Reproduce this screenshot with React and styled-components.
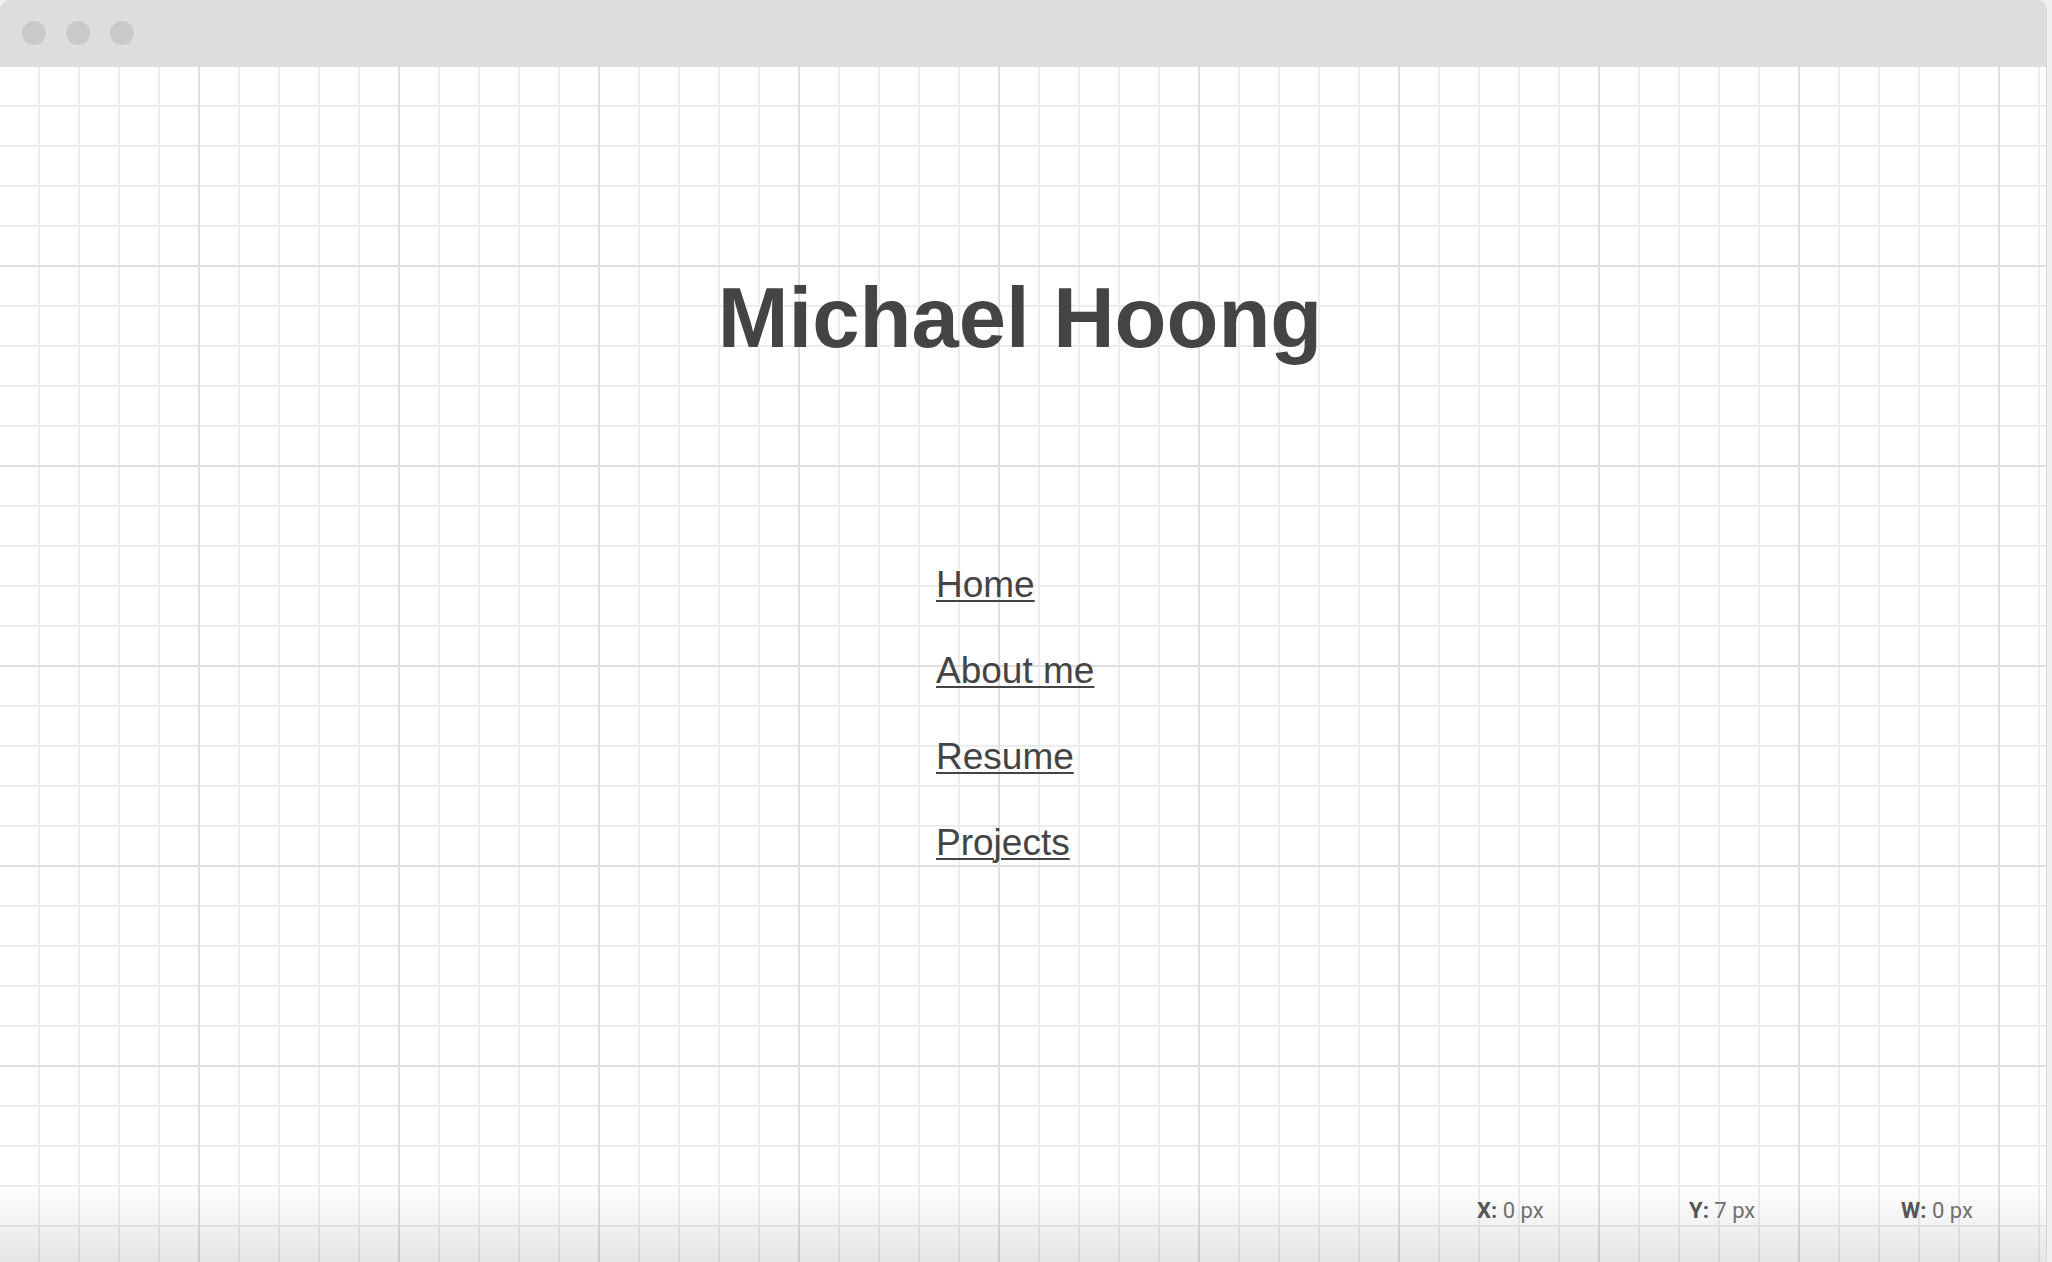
import styled, { createGlobalStyle } from 'styled-components'

const GlobalStyle = createGlobalStyle`
  html, body {
    margin: 0;
    height: 100%;
    background: #f0f0f0;
    font-family: "Liberation Sans", Arial, sans-serif;
  }
  #root {
    height: 100%;
  }
`

const Window = styled.div`
  height: 100%;
  width: 2046px;
  display: flex;
  flex-direction: column;
  border-right: 1px solid #d6d6d6;
  border-radius: 10px 10px 0 0;
  overflow: hidden;
  background: #fff;
`

const TitleBar = styled.div`
  height: 66px;
  flex-shrink: 0;
  background: #dddddd;
  display: flex;
  align-items: center;
  gap: 20px;
  padding-left: 22px;
`

const Dot = styled.span`
  width: 24px;
  height: 24px;
  border-radius: 50%;
  background: #c9c9c9;
`

const Canvas = styled.div`
  flex: 1;
  position: relative;
  background-color: #fff;
  background-image:
    linear-gradient(to right, #dfdfdf 2px, transparent 2px),
    linear-gradient(to bottom, #dfdfdf 2px, transparent 2px),
    linear-gradient(to right, #ededed 2px, transparent 2px),
    linear-gradient(to bottom, #ededed 2px, transparent 2px);
  background-size: 200px 200px, 200px 200px, 40px 40px, 40px 40px;
  background-position: -2px -1px, -2px -1px, -2px -1px, -2px -1px;
`

const Main = styled.main`
  display: flex;
  flex-direction: column;
  align-items: center;
  padding: 209px 6px 0 0;
`

const Title = styled.h1`
  margin: 0;
  font-size: 85px;
  line-height: 1;
  font-weight: 700;
  color: #444;
`

const Nav = styled.nav`
  width: 168px;
  margin-top: 206px;
  display: flex;
  flex-direction: column;
  align-items: flex-start;
  gap: 49px;
`

const NavLink = styled.a`
  font-size: 37px;
  line-height: 1;
  color: #444;
  text-decoration: underline;
  text-decoration-thickness: 2px;
  text-underline-offset: 3px;
`

const StatusBar = styled.div`
  position: absolute;
  left: 0;
  right: 0;
  bottom: 0;
  height: 76px;
  box-sizing: border-box;
  padding: 13px 70px 0 0;
  display: grid;
  grid-template-columns: 212px 212px 75px;
  justify-content: end;
  align-content: start;
  background: linear-gradient(to bottom, rgba(0, 0, 0, 0), rgba(0, 0, 0, 0.1));
  font-family: Roboto, "Liberation Sans", sans-serif;
  font-size: 22px;
  line-height: 23px;
  color: #707070;
`

const Label = styled.b`
  color: #555;
  font-weight: 700;
`

const links = ['Home', 'About me', 'Resume', 'Projects']
const coords = [['X', 0], ['Y', 7], ['W', 0]]

export default function App() {
  return (
    <>
      <GlobalStyle />
      <Window>
        <TitleBar>
          <Dot />
          <Dot />
          <Dot />
        </TitleBar>
        <Canvas>
          <Main>
            <Title>Michael Hoong</Title>
            <Nav>
              {links.map(l =>
                <NavLink key={l} href="#">{l}</NavLink>
              )}
            </Nav>
          </Main>
          <StatusBar>
            {coords.map(([k, v]) =>
              <span key={k}><Label>{k}:</Label> {v} px</span>
            )}
          </StatusBar>
        </Canvas>
      </Window>
    </>
  )
}
